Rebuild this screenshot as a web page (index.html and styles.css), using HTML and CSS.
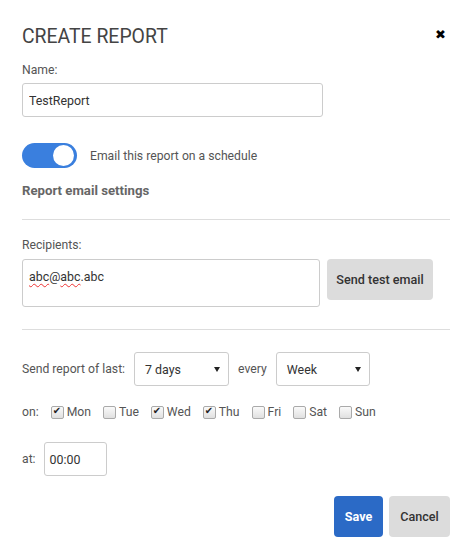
FILE: index.html
```html
<!DOCTYPE html>
<html lang="en">
<head>
    <meta charset="UTF-8">
    <meta name="viewport" content="width=device-width, initial-scale=1.0">
    <title>Create Report</title>
    <link rel="stylesheet" href="styles.css">
</head>
<body>
    <div class="modal">
        <div class="modal-header">
            <h1>CREATE REPORT</h1>
            <span class="close">&#10006;</span>
        </div>

        <label class="field-label" for="name">Name:</label>
        <input class="text-input name-input" type="text" id="name" value="TestReport">

        <div class="toggle-row">
            <span class="toggle"><span class="knob"></span></span>
            <span class="toggle-text">Email this report on a schedule</span>
        </div>

        <h2>Report email settings</h2>
        <hr>

        <label class="field-label recipients-label" for="recipients">Recipients:</label>
        <div class="recipients-row">
            <div class="textarea"><span class="misspelt">abc</span>@<span class="misspelt">abc</span>.abc</div>
            <button class="btn btn-grey btn-test">Send test email</button>
        </div>
        <hr class="hr-second">

        <div class="inline-row">
            <span class="row-label">Send report of last:</span>
            <div class="select select-days">7 days<span class="arrow"></span></div>
            <span class="row-label">every</span>
            <div class="select select-every">Week<span class="arrow"></span></div>
        </div>

        <div class="days-row">
            <span class="row-label">on:</span>
            <span class="day"><span class="check checked"></span>Mon</span>
            <span class="day"><span class="check"></span>Tue</span>
            <span class="day"><span class="check checked"></span>Wed</span>
            <span class="day"><span class="check checked"></span>Thu</span>
            <span class="day"><span class="check"></span>Fri</span>
            <span class="day"><span class="check"></span>Sat</span>
            <span class="day"><span class="check"></span>Sun</span>
        </div>

        <div class="time-row">
            <span class="row-label">at:</span>
            <div class="time-input">00:00</div>
        </div>

        <div class="actions">
            <button class="btn btn-save">Save</button>
            <button class="btn btn-grey btn-cancel">Cancel</button>
        </div>
    </div>
</body>
</html>
```

FILE: styles.css
```css
body {
    font-family: Roboto, "Liberation Sans", Arial, sans-serif;
    background-color: #fff;
    margin: 0;
    padding: 0;
    color: #555;
}

.modal {
    padding: 24px 24px 0 22px;
}

.modal-header {
    display: flex;
    justify-content: space-between;
    align-items: flex-start;
}

h1 {
    margin: 0;
    font-size: 19.4px;
    font-weight: 400;
    line-height: 26px;
    color: #444;
}

.close {
    font-size: 13px;
    color: #000;
    margin: 3px 4px 0 0;
    font-weight: bold;
    font-family: "DejaVu Sans", sans-serif;
}

.field-label {
    display: block;
    font-size: 12.2px;
    line-height: 16px;
    margin-top: 12px;
    margin-bottom: 5px;
}

.recipients-label {
    margin-top: 17px;
    margin-bottom: 6px;
}

.text-input {
    box-sizing: border-box;
    border: 1px solid #ccc;
    border-radius: 3px;
    font-family: inherit;
    font-size: 12.4px;
    color: #333;
    padding: 0 6px;
    display: block;
}

.name-input {
    width: 301px;
    height: 34px;
}

.toggle-row {
    display: flex;
    align-items: center;
    margin-top: 26px;
}

.toggle {
    width: 55px;
    height: 25px;
    border-radius: 13px;
    background-color: #3a7fde;
    display: flex;
    align-items: center;
    justify-content: flex-end;
    padding-right: 3px;
    box-sizing: border-box;
}

.knob {
    width: 21px;
    height: 21px;
    border-radius: 50%;
    background-color: #fff;
}

.toggle-text {
    font-size: 12.2px;
    margin-left: 13px;
}

h2 {
    font-size: 13.2px;
    font-weight: bold;
    color: #666;
    margin: 14px 0 0;
    line-height: 18px;
}

hr {
    border: none;
    border-top: 1px solid #ddd;
    margin: 19px 0 0;
}

.hr-second {
    margin-top: 22px;
}

.recipients-row {
    display: flex;
    align-items: flex-start;
    gap: 7px;
}

.textarea {
    width: 298px;
    height: 48px;
    box-sizing: border-box;
    border: 1px solid #ccc;
    border-radius: 3px;
    font-size: 12.4px;
    color: #333;
    padding: 9px 6px;
}

.misspelt {
    text-decoration: underline wavy #e33;
    text-decoration-thickness: 1px;
    text-underline-offset: 2px;
}

.btn {
    border: none;
    border-radius: 4px;
    font-family: inherit;
    font-size: 12.6px;
    font-weight: 500;
    cursor: pointer;
    padding: 0;
}

.btn-grey {
    background-color: #dcdcdc;
    color: #333;
}

.btn-test {
    width: 106px;
    height: 41px;
}

.inline-row {
    display: flex;
    align-items: center;
    margin-top: 22px;
}

.row-label {
    font-size: 12.2px;
    margin-right: 9px;
}

.select {
    position: relative;
    box-sizing: border-box;
    height: 34px;
    border: 1px solid #ccc;
    border-radius: 3px;
    font-size: 12.4px;
    color: #333;
    padding: 0 10px;
    display: flex;
    align-items: center;
    margin-right: 9px;
}

.select-days {
    width: 95px;
}

.select-every {
    width: 94px;
}

.arrow {
    position: absolute;
    right: 8px;
    top: 14px;
    border-left: 3px solid transparent;
    border-right: 3px solid transparent;
    border-top: 5px solid #222;
}

.days-row {
    display: flex;
    align-items: center;
    margin-top: 19px;
    font-size: 12.2px;
}

.days-row .row-label {
    margin-right: 12px;
}

.day {
    display: flex;
    align-items: center;
    margin-right: 12px;
}

.check {
    width: 11px;
    height: 11px;
    border: 1px solid #aaa;
    border-radius: 2px;
    background: linear-gradient(#fafafa, #e0e0e0);
    margin-right: 3px;
    position: relative;
}

.check.checked::after {
    content: "\2714";
    position: absolute;
    left: 1px;
    top: -2px;
    font-size: 10px;
    color: #222;
    font-family: "DejaVu Sans", sans-serif;
}

.time-row {
    display: flex;
    align-items: center;
    margin-top: 23px;
}

.time-row .row-label {
    margin-right: 8px;
}

.time-input {
    box-sizing: border-box;
    width: 63px;
    height: 34px;
    border: 1px solid #ccc;
    border-radius: 3px;
    font-size: 12.4px;
    color: #333;
    padding: 0 5px;
    display: flex;
    align-items: center;
}

.actions {
    display: flex;
    justify-content: flex-end;
    gap: 6px;
    margin-top: 20px;
}

.btn-save {
    background-color: #2b6ac6;
    color: #fff;
    font-weight: bold;
    width: 49px;
    height: 41px;
}

.btn-cancel {
    width: 61px;
    height: 41px;
}
```
